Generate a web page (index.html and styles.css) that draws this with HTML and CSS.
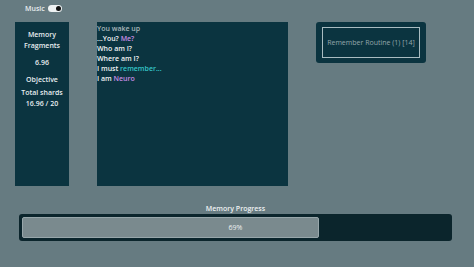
FILE: index.html
```html
<!DOCTYPE html>
<html>
<head>
<meta charset="utf-8">
<link rel="stylesheet" href="styles.css">
</head>
<body>
<div class="page">
  <div class="topbar">
    <span class="music-label">Music</span>
    <span class="toggle"><span class="knob"></span></span>
  </div>
  <div class="main">
    <div class="stats">
      <div class="stat-title">Memory<br>Fragments</div>
      <div class="stat-value">6.96</div>
      <div class="stat-title obj">Objective</div>
      <div class="stat-title shards">Total shards</div>
      <div class="stat-value small">16.96 / 20</div>
    </div>
    <div class="log">
      <div class="line dim">You wake up</div>
      <div class="line">...You? <span class="purple">Me?</span></div>
      <div class="line">Who am I?</div>
      <div class="line">Where am I?</div>
      <div class="line">I must <span class="cyan">remember...</span></div>
      <div class="line">I am <span class="purple">Neuro</span></div>
    </div>
    <div class="routines">
      <button class="routine-btn">Remember Routine (1) [14]</button>
    </div>
  </div>
  <div class="progress">
    <div class="progress-label">Memory Progress</div>
    <div class="bar">
      <div class="fill" style="width:69.5%"></div>
      <span class="pct">69%</span>
    </div>
  </div>
</div>
</body>
</html>
```

FILE: styles.css
```css
html, body {
  margin: 0;
  padding: 0;
  background: #667b81;
}
body {
  font-family: "Open Sans", "Noto Sans", sans-serif;
  font-size: 7px;
  font-weight: 600;
  color: #e8eef0;
}
.page {
  width: 474px;
  height: 267px;
  display: flex;
  flex-direction: column;
}
.topbar {
  height: 22px;
  display: flex;
  align-items: flex-start;
  padding-left: 25px;
  gap: 3px;
}
.music-label {
  line-height: 11px;
  margin-top: 3px;
}
.toggle {
  margin-top: 5px;
  width: 14px;
  height: 7px;
  border-radius: 4px;
  background: #eef2f3;
  display: flex;
  align-items: center;
  justify-content: flex-end;
  padding-right: 1px;
  box-sizing: border-box;
}
.knob {
  width: 5px;
  height: 5px;
  border-radius: 50%;
  background: #111;
}
.main {
  display: flex;
  align-items: flex-start;
  padding-left: 15px;
}
.stats {
  width: 54px;
  height: 164px;
  background: #0b3440;
  text-align: center;
  padding-top: 7px;
  box-sizing: border-box;
  line-height: 11px;
}
.stat-value {
  margin-top: 6px;
}
.obj {
  margin-top: 6px;
}
.shards {
  margin-top: 2px;
}
.stat-value.small {
  margin-top: 0;
}
.log {
  margin-left: 28px;
  width: 191px;
  height: 164px;
  background: #0b3440;
  padding-top: 2px;
  box-sizing: border-box;
  line-height: 10px;
  color: #f2f5f6;
}
.dim { color: #a9b7bb; }
.purple { color: #c68ce4; }
.cyan { color: #36c6c8; }
.routines {
  margin-left: 28px;
  width: 110px;
  height: 41px;
  background: #0b3440;
  border-radius: 3px;
  padding: 5px 6px;
  box-sizing: border-box;
  display: flex;
}
.routine-btn {
  flex: 1;
  background: transparent;
  border: 1px solid #a9bcc1;
  color: #95a7ab;
  font-family: "Open Sans", "Noto Sans", sans-serif;
  font-size: 7px;
  font-weight: 400;
  padding: 0;
  white-space: nowrap;
}
.progress {
  margin-top: 18px;
  padding: 0 22px 0 19px;
  display: flex;
  flex-direction: column;
}
.progress-label {
  text-align: center;
  line-height: 10px;
  color: #eef2f3;
}
.bar {
  position: relative;
  height: 27px;
  background: #0b252c;
  border-radius: 3px;
  padding: 3px;
  box-sizing: border-box;
  display: flex;
}
.fill {
  background: #7a8a8e;
  border: 1px solid #97a6aa;
  border-radius: 2px;
  box-sizing: border-box;
}
.pct {
  position: absolute;
  left: 0;
  right: 0;
  top: 0;
  bottom: 0;
  display: flex;
  align-items: center;
  justify-content: center;
  color: #eef2f3;
  font-weight: 400;
}
```
